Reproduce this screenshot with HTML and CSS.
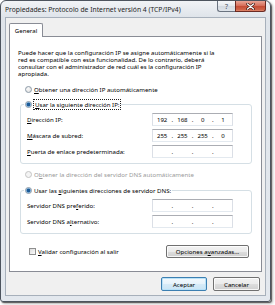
FILE: index.html
```html
<!DOCTYPE html>
<html lang="es">
<head>
<meta charset="utf-8">
<title>Propiedades: Protocolo de Internet versión 4 (TCP/IPv4)</title>
<link rel="stylesheet" href="styles.css">
</head>
<body>
<div class="window">
  <div class="titlebar">
    <span class="title">Propiedades: Protocolo de Internet versión 4 (TCP/IPv4)</span>
    <div class="caption-btns">
      <div class="cbtn help">?</div>
      <div class="cbtn close">
        <svg width="9" height="7" viewBox="0 0 9 7"><path d="M1.5 1 L7.5 6 M7.5 1 L1.5 6" stroke="#3a1a14" stroke-width="2.6" stroke-linecap="round"/><path d="M1.5 1 L7.5 6 M7.5 1 L1.5 6" stroke="#fff" stroke-width="1.3" stroke-linecap="round"/></svg>
      </div>
    </div>
  </div>
  <div class="client">
    <div class="tabs"><div class="tab">General</div></div>
    <div class="panel">
      <p class="intro"><span class="line">Puede hacer que la configuración IP se asigne automáticamente si la</span><span class="line">red es compatible con esta funcionalidad. De lo contrario, deberá</span><span class="line">consultar con el administrador de red cuál es la configuración IP</span><span class="line">apropiada.</span></p>

      <div class="option first"><span class="radio"></span><span><u>O</u>btener una dirección IP automáticamente</span></div>

      <fieldset class="group">
        <legend class="option"><span class="radio checked"></span><span class="focus"><u>U</u>sar la siguiente dirección IP:</span></legend>
        <div class="field-row"><span><u>D</u>irección IP:</span>
          <div class="ip"><span class="oct">192</span><span class="dot">.</span><span class="oct">168</span><span class="dot">.</span><span class="oct">0</span><span class="dot">.</span><span class="oct">1</span></div>
        </div>
        <div class="field-row"><span><u>M</u>áscara de subred:</span>
          <div class="ip"><span class="oct">255</span><span class="dot">.</span><span class="oct">255</span><span class="dot">.</span><span class="oct">255</span><span class="dot">.</span><span class="oct">0</span></div>
        </div>
        <div class="field-row"><span><u>P</u>uerta de enlace predeterminada:</span>
          <div class="ip"><span class="oct"></span><span class="dot">.</span><span class="oct"></span><span class="dot">.</span><span class="oct"></span><span class="dot">.</span><span class="oct"></span></div>
        </div>
      </fieldset>

      <div class="option disabled"><span class="radio"></span><span>O<u>b</u>tener la dirección del servidor DNS automáticamente</span></div>

      <fieldset class="group">
        <legend class="option"><span class="radio checked"></span><span>Usar las <u>s</u>iguientes direcciones de servidor DNS:</span></legend>
        <div class="field-row"><span>Servidor DNS pre<u>f</u>erido:</span>
          <div class="ip"><span class="oct"></span><span class="dot">.</span><span class="oct"></span><span class="dot">.</span><span class="oct"></span><span class="dot">.</span><span class="oct"></span></div>
        </div>
        <div class="field-row"><span>Servidor DNS a<u>l</u>ternativo:</span>
          <div class="ip"><span class="oct"></span><span class="dot">.</span><span class="oct"></span><span class="dot">.</span><span class="oct"></span><span class="dot">.</span><span class="oct"></span></div>
        </div>
      </fieldset>

      <div class="bottom-row">
        <span class="check"></span><span class="check-label"><u>V</u>alidar configuración al salir</span>
        <button class="btn adv">Opciones a<u>v</u>anzadas...</button>
      </div>
    </div>
    <div class="dialog-btns">
      <button class="btn default">Aceptar</button>
      <button class="btn">Cancelar</button>
    </div>
  </div>
</div>
</body>
</html>
```

FILE: styles.css
```css
* { box-sizing: border-box; }
html, body { margin: 0; padding: 0; background: #fff; }
body {
  width: 275px;
  height: 305px;
  overflow: hidden;
  font-family: "Noto Sans", "Open Sans", sans-serif;
  font-size: 6.1px;
  color: #000;
}
u { text-decoration-thickness: 1px; text-underline-offset: 1px; }

.window {
  width: 271px;
  height: 302px;
  border: 1px solid #4d545e;
  border-radius: 6px 6px 3px 3px;
  background: linear-gradient(#f1f3f6, #dfe4ea 16px, #e3e8ee);
  box-shadow: 1px 1px 1px rgba(0,0,0,.55), 2px 2px 3px rgba(0,0,0,.25);
  display: flex;
  flex-direction: column;
  padding: 0 4px 5px 4px;
}

.titlebar {
  height: 16px;
  display: flex;
  align-items: center;
}
.title { font-size: 6.75px; color: #1e1e1e; white-space: nowrap; }
.caption-btns {
  margin-left: auto;
  align-self: flex-start;
  display: flex;
  height: 11px;
}
.cbtn {
  height: 11px;
  display: flex;
  align-items: center;
  justify-content: center;
  border: 1px solid #6a7380;
  border-top: none;
}
.help {
  width: 18px;
  border-right: none;
  border-radius: 0 0 0 3px;
  background: linear-gradient(#f6f7f9, #e4e8ed 50%, #d3d9e0 51%, #dfe4ea);
  color: #4a5563;
  font-size: 7px;
  line-height: 1;
}
.close {
  width: 31px;
  border-color: #6b2a22;
  border-radius: 0 0 3px 0;
  background: linear-gradient(#e9a596, #d7715d 45%, #c44a34 50%, #cf6247 85%, #e08a6f);
}

.client {
  flex: 1;
  background: #f0f0f0;
  border: 1px solid #a7b0bb;
  display: flex;
  flex-direction: column;
  padding-top: 5px;
}
.tabs { height: 13px; display: flex; padding-left: 3px; }
.tab {
  width: 34px;
  height: 14px;
  background: #fff;
  border: 1px solid #898c95;
  border-bottom: none;
  border-radius: 2px 2px 0 0;
  display: flex;
  align-items: center;
  justify-content: center;
  position: relative;
  z-index: 1;
}
.panel {
  height: 236px;
  margin: 0 3px;
  background: #fff;
  border: 1px solid #898c95;
  display: flex;
  flex-direction: column;
}
.intro {
  margin: 12px 0 0 8px;
  display: flex;
  flex-direction: column;
  white-space: nowrap;
}
.intro .line { height: 7px; line-height: 7px; }
.option {
  display: flex;
  align-items: center;
  height: 9px;
  white-space: nowrap;
  gap: 2px;
}
.option.first { margin: 8px 0 0 15px; }
.option.disabled { margin: 6px 0 0 15px; color: #9a9a9a; }
.option.disabled .radio { border-color: #c4c4c4; background: #f4f4f4; }

.radio {
  width: 7px;
  height: 7px;
  border-radius: 50%;
  border: 1px solid #8c9aa8;
  background: radial-gradient(circle at 40% 35%, #fafafa, #dcdcdc);
  flex: none;
}
.radio.checked {
  background: radial-gradient(circle, #1d5b96 0 1.4px, #5d9bd3 1.9px, #cfe2f2 2.6px, #eef3f8 3.5px);
}
.focus { outline: 1px dotted #222; outline-offset: 0; padding: 0 1px; }

.group {
  margin: 5px 9px 0 10px;
  padding: 0 18px 5px 6px;
  border: 1px solid #d5dfe5;
  border-radius: 3px;
  min-inline-size: 0;
}
.option.disabled + .group { margin-top: 6px; }
.group legend {
  margin-left: -3px;
  padding: 0 1px;
  height: 10px;
}
.field-row {
  display: flex;
  align-items: center;
  height: 13px;
  margin-top: 3px;
  white-space: nowrap;
}
.group legend + .field-row { margin-top: 4px; }
.ip {
  margin-left: auto;
  width: 81px;
  height: 13px;
  border: 1px solid #abadb3;
  border-left-color: #dbdfe6;
  border-right-color: #dbdfe6;
  border-bottom-color: #e3e9ef;
  background: #fff;
  display: flex;
  align-items: center;
}
.oct { flex: 1; text-align: center; }
.dot { width: 2px; text-align: center; }

.bottom-row {
  display: flex;
  align-items: center;
  height: 13px;
  margin: 11px 12px 0 19px;
  white-space: nowrap;
}
.check {
  width: 7px;
  height: 7px;
  border: 1px solid #8e8f8f;
  background: linear-gradient(135deg, #dcdcdc, #fbfbfb);
  margin-right: 2px;
  flex: none;
}

.btn {
  font: inherit;
  color: #000;
  height: 13px;
  padding: 0;
  border: 1px solid #707070;
  border-radius: 2px;
  background: linear-gradient(#f2f2f2, #ebebeb 50%, #dddddd 51%, #cfcfcf);
  box-shadow: inset 0 0 0 1px rgba(255,255,255,.8);
  display: flex;
  align-items: center;
  justify-content: center;
}
.adv { margin-left: auto; width: 83px; }

.dialog-btns {
  display: flex;
  justify-content: flex-end;
  gap: 6px;
  margin-top: 5px;
  padding-right: 5px;
}
.dialog-btns .btn { width: 47px; height: 14px; }
.btn.default {
  width: 46px;
  border-color: #3c7fb1;
  background: linear-gradient(#f3f9fd, #e6f3fb 50%, #d6ebf8 51%, #c9e4f5);
  box-shadow: inset 0 0 0 1px #b9e2f8;
}
```
